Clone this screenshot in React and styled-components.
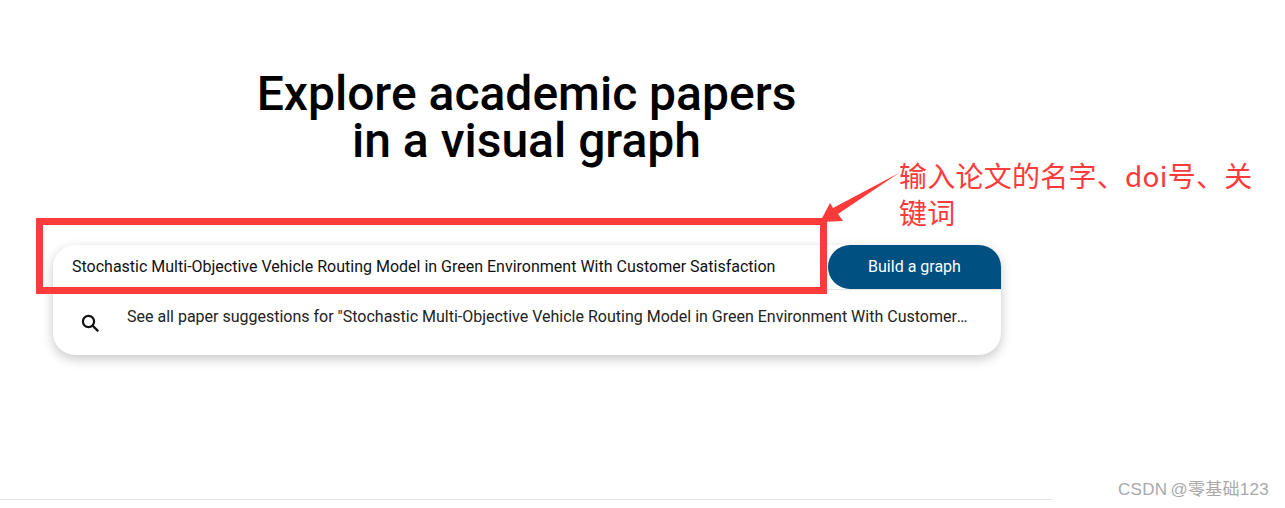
import React from "react";
import styled, { createGlobalStyle } from "styled-components";

const Global = createGlobalStyle`
  html, body { margin: 0; padding: 0; background: #fff; }
  body { font-family: Roboto, "Noto Sans CJK SC", sans-serif; overflow: hidden; }
`;
const Page = styled.div`
  position: relative;
  width: 1285px;
  height: 508px;
  overflow: hidden;
  background: #fff;
`;
const Main = styled.main`
  width: 950px;
  height: 499px;
  margin-left: 52px;
  padding-top: 70px;
  box-sizing: border-box;
  display: flex;
  flex-direction: column;
  align-items: stretch;
`;
const Title = styled.h1`
  margin: 0 1px 81px 0;
  font-size: 48px;
  line-height: 47px;
  font-weight: 500;
  color: #000;
  text-align: center;
`;
const SearchCard = styled.div`
  width: 948px;
  margin-left: 1px;
  border-radius: 22px;
  background: #fff;
  box-shadow: 0 4px 12px rgba(0, 0, 0, 0.22);
`;
const SearchRow = styled.div`
  display: flex;
  height: 44px;
  border-bottom: 1px solid #e4e4e4;
  box-sizing: content-box;
`;
const Query = styled.div`
  flex: 1;
  padding-left: 19px;
  font-size: 16px;
  line-height: 44px;
  color: #111;
  white-space: nowrap;
`;
const BuildButton = styled.button`
  width: 173px;
  height: 44px;
  border: 0;
  padding: 0 0 2px 0;
  border-radius: 22px 22px 0 22px;
  background: #005082;
  color: #fff;
  font: 400 16px Roboto, sans-serif;
`;
const Suggestion = styled.div`
  display: flex;
  height: 65px;
  padding: 17px 0 0 28px;
  box-sizing: border-box;
`;
const SearchIcon = styled.svg`
  width: 18px;
  height: 18px;
  margin-top: 7px;
  flex: none;
`;
const SuggestionText = styled.div`
  margin-left: 28px;
  width: 841px;
  font-size: 16px;
  line-height: 19px;
  color: #222;
  white-space: nowrap;
  overflow: hidden;
  text-overflow: ellipsis;
`;
const Rule = styled.div`
  position: absolute;
  left: 0;
  top: 499px;
  width: 1052px;
  height: 1px;
  background: #e5e5e5;
`;
const RedBox = styled.div`
  position: absolute;
  left: 36px;
  top: 218px;
  width: 791px;
  height: 76px;
  box-sizing: border-box;
  border: 7px solid #ff3a3a;
`;
const Arrow = styled.svg`
  position: absolute;
  left: 815px;
  top: 168px;
  width: 90px;
  height: 60px;
`;
const Note = styled.div`
  position: absolute;
  left: 899px;
  top: 157px;
  width: 360px;
  font-family: "Noto Sans CJK SC", sans-serif;
  font-size: 28px;
  line-height: 37px;
  letter-spacing: 0.25px;
  color: #ff3a3a;
`;
const Watermark = styled.div`
  position: absolute;
  left: 1118px;
  top: 480px;
  font-family: "Liberation Sans", "Noto Sans CJK SC", sans-serif;
  font-size: 17px;
  line-height: 20px;
  letter-spacing: 0.3px;
  word-spacing: -2px;
  color: #a9a9a9;
  white-space: nowrap;
`;

export default function App() {
  return (
    <Page>
      <Global />
      <Main>
        <Title>Explore academic papers<br />in a visual graph</Title>
        <SearchCard>
          <SearchRow>
            <Query>Stochastic Multi-Objective Vehicle Routing Model in Green Environment With Customer Satisfaction</Query>
            <BuildButton>Build a graph</BuildButton>
          </SearchRow>
          <Suggestion>
            <SearchIcon viewBox="0 0 18 18" fill="none" stroke="#111" strokeWidth="2.2">
              <circle cx="7.5" cy="7.5" r="5.6" />
              <path d="M11.7 11.7 L16.6 16.6" strokeLinecap="round" />
            </SearchIcon>
            <SuggestionText>See all paper suggestions for "Stochastic Multi-Objective Vehicle Routing Model in Green Environment With Customer Satisfaction"</SuggestionText>
          </Suggestion>
        </SearchCard>
      </Main>
      <Rule />
      <RedBox />
      <Arrow viewBox="815 168 90 60">
        <polygon points="899,173 833,208 830,203 820,222 843,221 838,214" fill="#ff3a3a" />
      </Arrow>
      <Note>输入论文的名字、doi号、关键词</Note>
      <Watermark>CSDN @零基础123</Watermark>
    </Page>
  );
}
